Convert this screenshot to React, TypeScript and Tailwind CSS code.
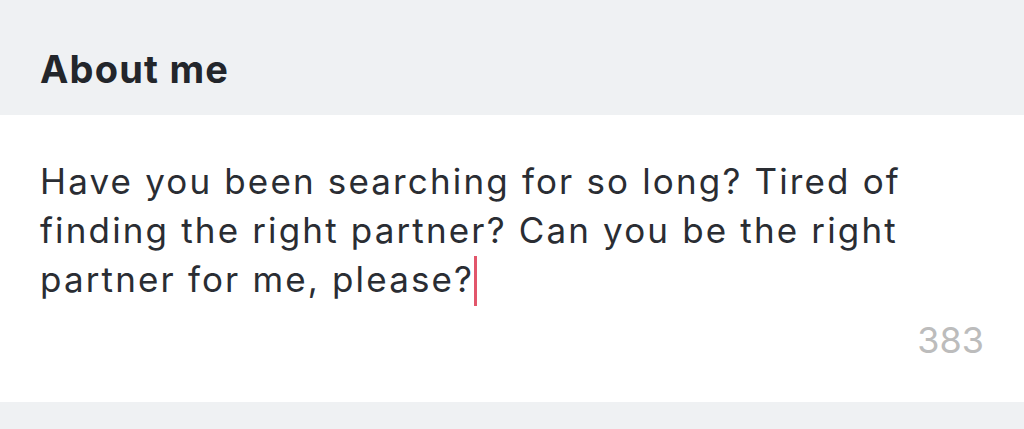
import React from 'react';

export default function App() {
  const lines = [
    'Have you been searching for so long? Tired of',
    'finding the right partner? Can you be the right',
    'partner for me, please?',
  ];

  return (
    <div className="w-[1024px] h-[429px] bg-[#eff1f3] flex flex-col" style={{ fontFamily: 'Inter, "Open Sans", sans-serif' }}>
      {/* Section header */}
      <div className="h-[115px] px-[40px] pt-[50px]">
        <h2 className="text-[38px] font-bold text-[#23262b] tracking-[1.2px] leading-none">About me</h2>
      </div>

      {/* Editable text area */}
      <div className="h-[287px] bg-white px-[40px] pt-[42px]">
        <p className="text-[35px] leading-[49px] tracking-[2.15px] text-[#2a2d33]">
          {lines.map((l, i) => (
            <span key={i} className="block whitespace-nowrap">
              {l}
              {i === lines.length - 1 && (
                <span className="inline-block w-[3px] h-[50px] bg-[#e2566b] align-[-14px]" />
              )}
            </span>
          ))}
        </p>
        <div className="flex justify-end mt-[16px]">
          <span className="text-[36px] text-[#bcbcbc] leading-none">383</span>
        </div>
      </div>
    </div>
  );
}
